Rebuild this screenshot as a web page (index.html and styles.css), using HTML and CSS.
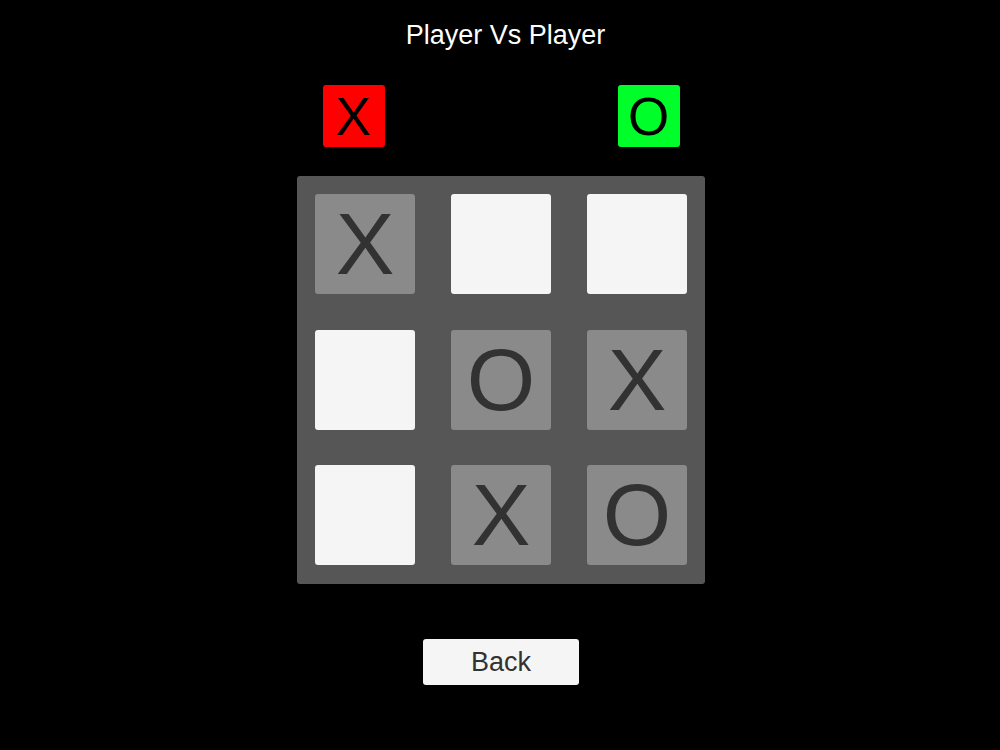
FILE: index.html
```html
<!DOCTYPE html>
<html>
<head>
<meta charset="utf-8">
<link rel="stylesheet" href="styles.css">
</head>
<body>
<div class="screen">
  <div class="title">Player Vs Player</div>
  <div class="badges">
    <div class="badge badge-x">X</div>
    <div class="badge badge-o">O</div>
  </div>
  <div class="board">
    <div class="cell filled">X</div>
    <div class="cell"></div>
    <div class="cell"></div>
    <div class="cell"></div>
    <div class="cell filled">O</div>
    <div class="cell filled">X</div>
    <div class="cell"></div>
    <div class="cell filled">X</div>
    <div class="cell filled">O</div>
  </div>
  <div class="back">Back</div>
</div>
</body>
</html>
```
FILE: styles.css
```css
html, body {
  margin: 0;
  padding: 0;
  background: #000;
  width: 1000px;
  height: 750px;
  overflow: hidden;
  font-family: "Liberation Sans", Arial, sans-serif;
}
.screen {
  display: flex;
  flex-direction: column;
  align-items: center;
  padding-left: 2px;
}
.title {
  margin-top: 20px;
  height: 30px;
  line-height: 30px;
  font-size: 27px;
  color: #fff;
  padding-left: 9px;
}
.badges {
  margin-top: 35px;
  width: 357px;
  display: flex;
  justify-content: space-between;
}
.badge {
  width: 62px;
  height: 62px;
  border-radius: 3px;
  display: flex;
  align-items: center;
  justify-content: center;
  font-size: 53px;
  line-height: 1;
  color: #000;
}
.badge-x { background: #ff0000; }
.badge-o { background: #00ff2a; }
.board {
  margin-top: 29px;
  padding: 18px 18px 19px 18px;
  background: #565656;
  border-radius: 3px;
  display: grid;
  grid-template-columns: repeat(3, 100px);
  grid-template-rows: repeat(3, 100px);
  column-gap: 36px;
  row-gap: 35.5px;
}
.cell {
  background: #f5f5f5;
  border-radius: 3px;
  display: flex;
  align-items: center;
  justify-content: center;
  font-size: 88px;
  color: #323232;
  line-height: 1;
}
.cell.filled { background: #8a8a8a; }
.back {
  margin-top: 55px;
  width: 156px;
  height: 46px;
  background: #f5f5f5;
  border-radius: 3px;
  display: flex;
  align-items: center;
  justify-content: center;
  font-size: 27px;
  color: #323232;
}
```
